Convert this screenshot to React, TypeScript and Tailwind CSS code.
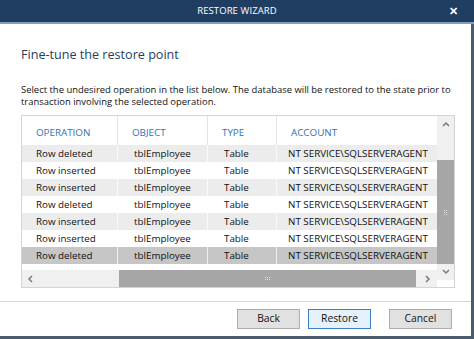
import React from 'react';

const font = { fontFamily: '"Segoe UI", "Open Sans", "Noto Sans", sans-serif' };

const rows = [
  ['Row deleted', 'tblEmployee', 'Table', 'NT SERVICE\\SQLSERVERAGENT'],
  ['Row inserted', 'tblEmployee', 'Table', 'NT SERVICE\\SQLSERVERAGENT'],
  ['Row inserted', 'tblEmployee', 'Table', 'NT SERVICE\\SQLSERVERAGENT'],
  ['Row deleted', 'tblEmployee', 'Table', 'NT SERVICE\\SQLSERVERAGENT'],
  ['Row inserted', 'tblEmployee', 'Table', 'NT SERVICE\\SQLSERVERAGENT'],
  ['Row inserted', 'tblEmployee', 'Table', 'NT SERVICE\\SQLSERVERAGENT'],
  ['Row deleted', 'tblEmployee', 'Table', 'NT SERVICE\\SQLSERVERAGENT'],
];

const cols = 'grid grid-cols-[96px_90px_69px_160px]';

function Chevron({ dir }: { dir: 'up' | 'down' | 'left' | 'right' }) {
  const d = {
    up: 'M1 5 L4 2 L7 5',
    down: 'M1 2 L4 5 L7 2',
    left: 'M5 1 L2 4 L5 7',
    right: 'M3 1 L6 4 L3 7',
  }[dir];
  return (
    <svg width="8" height="8" viewBox="0 0 8 8">
      <path d={d} fill="none" stroke="#7a7a7a" strokeWidth="1.5" />
    </svg>
  );
}

function Grip({ vertical }: { vertical?: boolean }) {
  return (
    <div className={vertical ? 'grid grid-cols-2 gap-[1px]' : 'grid grid-cols-3 gap-[1px]'}>
      {Array.from({ length: 6 }).map((_, i) => (
        <div key={i} className="w-[1px] h-[1px] bg-[#e0e0e0]" />
      ))}
    </div>
  );
}

export default function App() {
  return (
    <div className="w-[474px] h-[339px] flex flex-col bg-white text-[#1a1a1a]" style={font}>
      <div className="h-[24px] shrink-0 bg-[#1f3e62] border-b-2 border-[#7e9fbd] flex items-center justify-center relative">
        <span className="text-white text-[9.5px] tracking-[0.1px] pt-[1px]">RESTORE WIZARD</span>
        <span className="absolute right-[16px] top-[5px] text-white text-[11px] font-bold leading-none">✕</span>
      </div>

      <div className="flex-1 flex flex-col border-r-[3px] border-b-[3px] border-[#4a5c6e]">
        <div className="px-[21px] pt-[21px]">
          <h1 className="text-[12.6px] leading-[20px] text-[#1f3e62]">Fine-tune the restore point</h1>
          <p className="mt-[19px] text-[9.45px] leading-[12px] whitespace-nowrap text-[#111]">
            Select the undesired operation in the list below. The database will be restored to the state prior to
            <br />
            transaction involving the selected operation.
          </p>

          <div className="mt-[7px] w-[434px] h-[173px] border border-[#d4d4d4] flex text-[9.8px]">
            <div className="flex flex-col w-[415px]">
              <div className={`${cols} h-[29px] text-[#2f72b8]`}>
                {['OPERATION', 'OBJECT', 'TYPE', 'ACCOUNT'].map((h, i) => (
                  <div
                    key={h}
                    className={`flex items-center pt-[5px] pl-[14px] ${i < 3 ? 'border-r border-[#e3e3e3]' : ''}`}
                  >
                    {h}
                  </div>
                ))}
              </div>
              {rows.map((r, ri) => (
                <div
                  key={ri}
                  className={`${cols} h-[17px] text-[#111] ${
                    ri === 6 ? 'bg-[#c6c6c6]' : ri % 2 === 0 ? 'bg-[#ececec]' : 'bg-white'
                  }`}
                >
                  {r.map((c, ci) => (
                    <div
                      key={ci}
                      className={`flex items-center leading-none whitespace-nowrap ${
                        ci === 0 ? 'pl-[14px]' : ci === 3 ? 'pl-[11px]' : 'pl-[16px]'
                      } ${ci < 3 ? 'border-r border-white/70' : ''}`}
                    >
                      {c}
                    </div>
                  ))}
                </div>
              ))}
              <div className="flex-1" />
              <div className="h-[17px] flex items-center bg-[#f0f0f0]">
                <div className="w-[17px] flex items-center justify-center">
                  <Chevron dir="left" />
                </div>
                <div className="w-[80px]" />
                <div className="w-[297px] h-[17px] bg-[#a6a6a6] flex items-center justify-center">
                  <Grip />
                </div>
                <div className="flex-1 flex items-center justify-center">
                  <Chevron dir="right" />
                </div>
              </div>
            </div>
            <div className="flex-1 flex flex-col bg-[#f0f0f0]">
              <div className="h-[17px] flex items-center justify-center">
                <Chevron dir="up" />
              </div>
              <div className="h-[27px]" />
              <div className="h-[104px] bg-[#a6a6a6] flex items-center justify-center">
                <Grip vertical />
              </div>
              <div className="h-[16px] flex items-center justify-center">
                <Chevron dir="down" />
              </div>
              <div className="flex-1 bg-white" />
            </div>
          </div>
        </div>

        <div className="mt-[13px] border-t border-[#d6d6d6] flex justify-end items-start pt-[7px] pr-[19px] text-[10.3px]">
          <button className="w-[63px] h-[20px] bg-[#e1e1e1] border border-[#adadad] text-[#111]">Back</button>
          <button className="ml-[8px] w-[63px] h-[20px] bg-[#e5f1fb] border border-[#3c7fc4] text-[#111]">
            Restore
          </button>
          <button className="ml-[18px] w-[63px] h-[20px] bg-[#e1e1e1] border border-[#adadad] text-[#111]">
            Cancel
          </button>
        </div>
      </div>
    </div>
  );
}
